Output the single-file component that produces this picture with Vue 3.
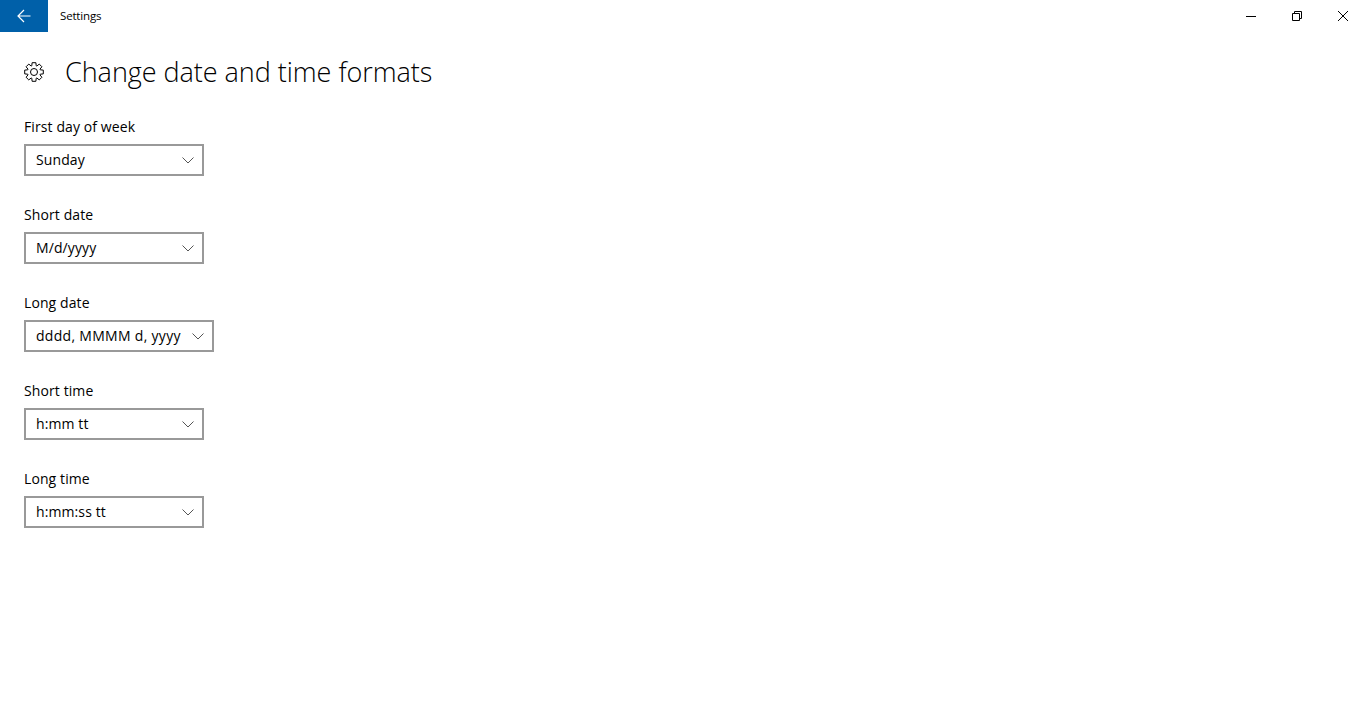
<template>
  <div class="window">
    <header class="titlebar">
      <button class="back" aria-label="Back">
        <svg width="16" height="16" viewBox="0 0 16 16" fill="none" stroke="#fff" stroke-width="1.200">
          <path d="M2 8h12.500M8 2L2 8l6 6" />
        </svg>
      </button>
      <span class="app-name">Settings</span>
      <div class="controls">
        <button class="ctl" aria-label="Minimize">
          <svg width="12" height="12" viewBox="0 0 12 12" fill="none" stroke="#000">
            <path d="M1 6.500h10" />
          </svg>
        </button>
        <button class="ctl" aria-label="Restore">
          <svg width="12" height="12" viewBox="0 0 12 12" fill="none" stroke="#000">
            <path d="M1.500 3.500h7v7h-7zM3.500 3.500v-2h7v7h-2" />
          </svg>
        </button>
        <button class="ctl" aria-label="Close">
          <svg width="12" height="12" viewBox="0 0 12 12" fill="none" stroke="#000">
            <path d="M1 1l10 10M11 1L1 11" />
          </svg>
        </button>
      </div>
    </header>

    <main class="content">
      <div class="heading">
        <svg class="gear" width="20" height="20" viewBox="0 0 20 20" fill="none" stroke="#000" stroke-width="1">
          <path :d="gearPath" stroke-linejoin="round" />
          <circle cx="10" cy="10" r="3.500" />
        </svg>
        <h1>Change date and time formats</h1>
      </div>

      <div v-for="field in fields" :key="field.label" class="field">
        <label>{{ field.label }}</label>
        <div class="combo" :class="{ wide: field.wide }">
          <span>{{ field.value }}</span>
          <svg width="12" height="7" viewBox="0 0 12 7" fill="none" stroke="#555">
            <path d="M.5.500L6 6l5.500-5.500" />
          </svg>
        </div>
      </div>
    </main>
  </div>
</template>

<script setup>
const fields = [
  { label: "First day of week", value: "Sunday" },
  { label: "Short date", value: "M/d/yyyy" },
  { label: "Long date", value: "dddd, MMMM d, yyyy", wide: true },
  { label: "Short time", value: "h:mm tt" },
  { label: "Long time", value: "h:mm:ss tt" },
];

// eight teeth round the centre of the cog
const gearPath = (() => {
  const pts = [];
  for (let i = 0; i < 8; i++) {
    const a = (i * Math.PI) / 4 - Math.PI / 2;
    const at = (r, off) =>
      `${(10 + r * Math.cos(a + off)).toFixed(2)} ${(10 + r * Math.sin(a + off)).toFixed(2)}`;
    pts.push(at(6.6, -0.34), at(9.5, -0.2), at(9.5, 0.2), at(6.6, 0.34));
  }
  return "M" + pts.join("L") + "Z";
})();
</script>

<style scoped>
.window {
  height: 728px;
  background: #fff;
  color: #000;
  font-family: "Open Sans", "Noto Sans", sans-serif;
  overflow: hidden;
}

.titlebar {
  display: flex;
  align-items: center;
  height: 32px;
}

button {
  border: none;
  background: none;
  padding: 0;
  display: flex;
  align-items: center;
  justify-content: center;
}

.back {
  width: 48px;
  height: 32px;
  background: #0060a9;
}

.app-name {
  margin-left: 12px;
  padding-bottom: 2px;
  font-size: 11.500px;
  letter-spacing: -0.17px;
}

.controls {
  display: flex;
  margin-left: auto;
}

.ctl {
  width: 46px;
  height: 32px;
}

.content {
  padding: 0 24px;
}

.heading {
  display: flex;
  align-items: center;
  height: 80px;
  margin-bottom: 2px;
}

.gear {
  flex-shrink: 0;
}

h1 {
  margin: 0 0 0 21px;
  font-size: 27px;
  font-weight: 300;
  line-height: 78px;
  letter-spacing: -0.04px;
}

.field {
  height: 88px;
}

label {
  display: block;
  height: 30px;
  line-height: 26px;
  font-size: 14px;
  letter-spacing: 0.1px;
}

.combo {
  box-sizing: border-box;
  display: flex;
  align-items: center;
  justify-content: space-between;
  width: 180px;
  height: 32px;
  padding: 0 8px 0 10px;
  border: 2px solid #999;
  font-size: 14px;
}

.combo span {
  margin-top: -2px;
  letter-spacing: 0.1px;
}

.combo.wide {
  width: 190px;
}

.combo.wide span {
  letter-spacing: 0.3px;
}
</style>
